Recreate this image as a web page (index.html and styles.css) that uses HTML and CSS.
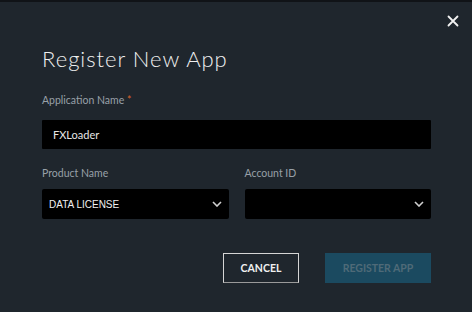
FILE: index.html
```html
<!DOCTYPE html>
<html>
<head>
<meta charset="utf-8">
<link rel="stylesheet" href="styles.css">
</head>
<body>
<div class="dialog">
  <button class="close" aria-label="Close">
    <svg width="12" height="12" viewBox="0 0 12 12"><path d="M1.5 1.5L10.5 10.5M10.5 1.5L1.5 10.5" stroke="#f2f2f2" stroke-width="1.8" stroke-linecap="round"/></svg>
  </button>
  <h1 class="title">Register New App</h1>
  <div class="field first">
    <label class="label">Application Name <span class="req">*</span></label>
    <div class="input">FXLoader</div>
  </div>
  <div class="row">
    <div class="field col">
      <label class="label">Product Name</label>
      <div class="select"><span>DATA LICENSE</span>
        <svg class="chev" width="10" height="6" viewBox="0 0 10 6"><path d="M1 1L5 5L9 1" fill="none" stroke="#d0d0d0" stroke-width="1.6"/></svg>
      </div>
    </div>
    <div class="field col">
      <label class="label">Account ID</label>
      <div class="select"><span></span>
        <svg class="chev" width="10" height="6" viewBox="0 0 10 6"><path d="M1 1L5 5L9 1" fill="none" stroke="#d0d0d0" stroke-width="1.6"/></svg>
      </div>
    </div>
  </div>
  <div class="actions">
    <button class="btn cancel">CANCEL</button>
    <button class="btn primary">REGISTER APP</button>
  </div>
</div>
</body>
</html>
```
FILE: styles.css
```css
html, body {
  margin: 0;
  padding: 0;
  height: 100%;
}
body {
  background: #1f262d;
  border-top: 2px solid #101317;
  box-sizing: border-box;
  font-family: Lato, "Noto Sans", sans-serif;
  color: #e8e8e8;
}
.dialog {
  position: relative;
  padding: 0 41px 0 42px;
}
.close {
  position: absolute;
  top: 13px;
  right: 13px;
  width: 12px;
  height: 12px;
  padding: 0;
  border: 0;
  background: none;
  display: flex;
}
.title {
  margin: 0;
  padding-top: 44px;
  font-size: 22px;
  line-height: 26px;
  font-weight: 300;
  color: #f0f0f0;
  letter-spacing: 1px;
}
.field {
  display: flex;
  flex-direction: column;
}
.first {
  margin-top: 22px;
}
.label {
  font-size: 10.5px;
  line-height: 12px;
  color: #98a0a8;
}
.first .label {
  margin-bottom: 14px;
}
.req {
  color: #d9622b;
}
.input {
  height: 29px;
  background: #000;
  border-radius: 1px;
  padding-left: 11px;
  display: flex;
  align-items: center;
  font-size: 11px;
  color: #e6e6e6;
}
.row {
  display: flex;
  gap: 16px;
  margin-top: 18px;
}
.col {
  flex: 1;
}
.row .label {
  margin-bottom: 10px;
}
.select {
  height: 30px;
  background: #000;
  border-radius: 2px;
  display: flex;
  align-items: center;
  justify-content: space-between;
  padding: 0 7px 0 7px;
  font-family: "Liberation Sans", Arial, sans-serif;
  font-size: 10px;
  color: #f0f0f0;
}
.chev {
  display: block;
}
.actions {
  display: flex;
  justify-content: flex-end;
  gap: 26px;
  margin-top: 34px;
}
.btn {
  height: 30px;
  font-family: Lato, sans-serif;
  font-weight: 700;
  font-size: 10.5px;
  padding: 0;
}
.cancel {
  width: 76px;
  background: transparent;
  border: 1px solid #d5d5d5;
  border-bottom-color: #9a9a9a;
  color: #f0f0f0;
}
.primary {
  width: 106px;
  background: #1b4a60;
  border: 0;
  color: #4f6a78;
}
```
